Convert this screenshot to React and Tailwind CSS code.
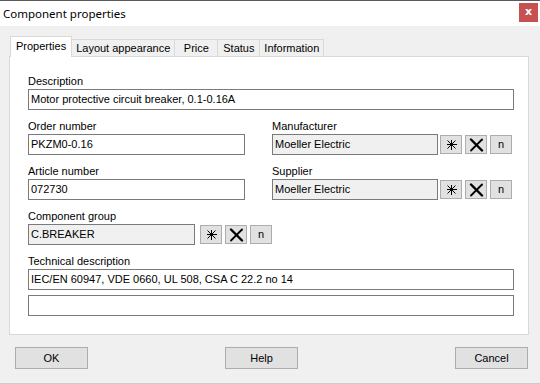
import React from "react";

const F = { fontFamily: '"Liberation Sans", Arial, sans-serif' };

function Star() {
  return (
    <svg width="11" height="11" viewBox="0 0 11 11" shapeRendering="crispEdges">
      <path d="M5.5 0.5V10.5M0.5 5.5H10.5" stroke="#000" strokeWidth="1" />
      <path d="M1.5 1.5L9.5 9.5M9.5 1.5L1.5 9.5" stroke="#000" strokeWidth="1" shapeRendering="auto" />
    </svg>
  );
}

function Cross() {
  return (
    <svg width="15" height="14" viewBox="0 0 15 14">
      <path d="M2 1.5L13 12.5" stroke="#000" strokeWidth="2.4" strokeLinecap="round" />
      <path d="M13 1.5L2 12.5" stroke="#000" strokeWidth="1.8" strokeLinecap="round" />
    </svg>
  );
}

function SmallBtn({ children }) {
  return (
    <div className="w-[22px] h-[19px] bg-[#e1e1e1] border border-[#adadad] flex items-center justify-center text-[11px] text-black">
      {children}
    </div>
  );
}

function Btns() {
  return (
    <div className="flex items-center gap-[3px]">
      <SmallBtn><Star /></SmallBtn>
      <SmallBtn><Cross /></SmallBtn>
      <SmallBtn>n</SmallBtn>
    </div>
  );
}

function Input({ value, w, gray }) {
  return (
    <div
      className={`h-[21px] border border-[#7a7a7a] flex items-center pl-[2px] text-[11px] text-black whitespace-nowrap overflow-hidden ${gray ? "bg-[#f0f0f0]" : "bg-white"}`}
      style={{ width: w }}
    >
      {value}
    </div>
  );
}

function Label({ children }) {
  return <div className="h-[14px] mb-[1px] leading-[14px] text-[11px] text-black">{children}</div>;
}

function Tab({ children, active, w }) {
  if (active)
    return (
      <div className="h-[21px] px-[5px] bg-white border border-b-0 border-[#d9d9d9] flex items-center text-[11px] text-black relative z-10 pb-[2px]">
        {children}
      </div>
    );
  return (
    <div
      className="h-[18px] px-[4px] bg-[#f0f0f0] border border-l-0 border-[#d9d9d9] flex items-center justify-center text-[11px] text-black"
      style={w ? { minWidth: w } : undefined}
    >
      {children}
    </div>
  );
}

function DlgButton({ children, className = "" }) {
  return (
    <div className={`w-[73px] h-[22px] bg-[#e1e1e1] border border-[#adadad] flex items-center justify-center text-[11px] text-black ${className}`}>
      {children}
    </div>
  );
}

export default function App() {
  return (
    <div className="w-[540px] h-[384px] bg-[#f0f0f0] flex flex-col border-t border-[#5a5a5a] border-b border-b-[#cccccc] overflow-hidden" style={F}>
      <div className="h-[25px] bg-white flex items-start justify-between shrink-0">
        <div className="pl-[3px] pt-[4px] text-[11.5px] text-black" style={{ fontFamily: '"Noto Sans", "Open Sans", sans-serif' }}>
          Component properties
        </div>
        <div className="mt-[2px] mr-[2px] w-[19px] h-[19px] bg-[#c75050] flex items-center justify-center text-white text-[11px] font-bold" style={{ fontFamily: '"DejaVu Sans", sans-serif' }}>
          x
        </div>
      </div>

      <div className="pl-[10px] pt-[10px] flex items-end shrink-0">
        <Tab active>Properties</Tab>
        <Tab>Layout appearance</Tab>
        <Tab w={43}>Price</Tab>
        <Tab w={42}>Status</Tab>
        <Tab>Information</Tab>
      </div>

      <div className="ml-[9px] w-[520px] h-[279px] -mt-px bg-white border border-[#d9d9d9] pl-[18px] pt-[17px] flex flex-col shrink-0">
        <Label>Description</Label>
        <Input value="Motor protective circuit breaker, 0.1-0.16A" w={486} />

        <div className="flex mt-[9px]">
          <div className="w-[244px]">
            <Label>Order number</Label>
            <Input value="PKZM0-0.16" w={217} />
          </div>
          <div>
            <Label>Manufacturer</Label>
            <div className="flex items-center gap-[2px]">
              <Input value="Moeller Electric" w={166} gray />
              <Btns />
            </div>
          </div>
        </div>

        <div className="flex mt-[9px]">
          <div className="w-[244px]">
            <Label>Article number</Label>
            <Input value="072730" w={217} />
          </div>
          <div>
            <Label>Supplier</Label>
            <div className="flex items-center gap-[2px]">
              <Input value="Moeller Electric" w={166} gray />
              <Btns />
            </div>
          </div>
        </div>

        <div className="mt-[9px]">
          <Label>Component group</Label>
          <div className="flex items-center gap-[5px]">
            <Input value="C.BREAKER" w={167} gray />
            <Btns />
          </div>
        </div>

        <div className="mt-[9px]">
          <Label>Technical description</Label>
          <Input value="IEC/EN 60947, VDE 0660, UL 508, CSA C 22.2 no 14" w={486} />
          <div className="mt-[5px]">
            <Input value="" w={486} />
          </div>
        </div>
      </div>

      <div className="flex pl-[15px] pr-[12px] mt-[12px]">
        <DlgButton>OK</DlgButton>
        <DlgButton className="ml-[137px]">Help</DlgButton>
        <DlgButton className="ml-auto">Cancel</DlgButton>
      </div>
    </div>
  );
}
